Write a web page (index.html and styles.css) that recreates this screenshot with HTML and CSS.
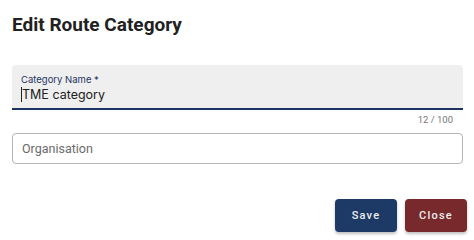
FILE: index.html
```html
<!DOCTYPE html>
<html>
<head>
<meta charset="utf-8">
<link rel="stylesheet" href="styles.css">
</head>
<body>
<div class="dialog">
  <h1 class="title">Edit Route Category</h1>
  <div class="field-filled">
    <label class="field-label">Category Name *</label>
    <div class="field-value"><span class="caret"></span>TME category</div>
  </div>
  <div class="hint">12 / 100</div>
  <div class="field-outlined">
    <span class="placeholder">Organisation</span>
  </div>
  <div class="actions">
    <button class="btn btn-save">Save</button>
    <button class="btn btn-close">Close</button>
  </div>
</div>
</body>
</html>
```
FILE: styles.css
```css
html, body {
  margin: 0;
  padding: 0;
  background: #ffffff;
}
body {
  font-family: Roboto, "Liberation Sans", sans-serif;
  width: 474px;
  height: 240px;
  overflow: hidden;
}
.dialog {
  padding: 12px 11px 0 12px;
  display: flex;
  flex-direction: column;
}
.title {
  margin: 0;
  font-size: 19px;
  line-height: 26px;
  font-weight: 700;
  color: #212121;
  letter-spacing: 0;
}
.field-filled {
  margin-top: 27px;
  height: 43px;
  background: #efefef;
  border-bottom: 2px solid #1d3462;
  border-radius: 4px 4px 0 0;
  padding: 0 9px;
  display: flex;
  flex-direction: column;
  justify-content: flex-start;
}
.field-label {
  margin-top: 9px;
  font-family: Inter, Roboto, sans-serif;
  font-size: 9.5px;
  line-height: 12px;
  color: #1d3462;
}
.field-value {
  font-family: Inter, Roboto, sans-serif;
  font-size: 12.5px;
  line-height: 17px;
  color: #212121;
  display: flex;
  align-items: center;
}
.caret {
  display: inline-block;
  width: 1px;
  height: 15px;
  background: #212121;
}
.hint {
  align-self: flex-end;
  font-size: 9.5px;
  line-height: 12px;
  color: #757575;
  padding-right: 10px;
  margin-top: 4px;
}
.field-outlined {
  margin-top: 7px;
  height: 29px;
  border: 1px solid #b5b5b5;
  border-radius: 4px;
  padding: 0 9px;
  display: flex;
  align-items: center;
}
.placeholder {
  font-size: 12.5px;
  color: #6b6b6b;
}
.actions {
  margin-top: 35px;
  margin-right: -4px;
  display: flex;
  justify-content: flex-end;
  gap: 8px;
}
.btn {
  width: 62px;
  height: 33px;
  border: none;
  border-radius: 4px;
  color: #eeeeee;
  font-family: Roboto, "Liberation Sans", sans-serif;
  font-size: 11px;
  font-weight: 500;
  letter-spacing: 1.2px;
  box-shadow: 0 2px 3px rgba(0,0,0,0.25);
  padding: 0;
}
.btn-save {
  background: #1d3a66;
}
.btn-close {
  background: #77292b;
}
```
